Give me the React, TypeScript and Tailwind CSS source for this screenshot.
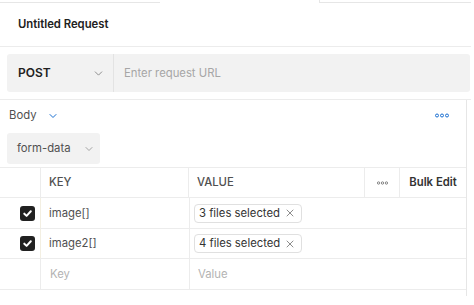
import { ChevronDown, X } from 'lucide-react';

const ROWS = [
  { key: 'image[]', value: '3 files selected', h: 'h-[31px]' },
  { key: 'image2[]', value: '4 files selected', h: 'h-[30px]' },
];

function Check() {
  return (
    <span className="flex h-[15px] w-[15px] items-center justify-center rounded-[3px] bg-[#212121]">
      <svg viewBox="0 0 12 12" className="h-[11px] w-[11px]" fill="none" stroke="white" strokeWidth="2.2" strokeLinecap="round" strokeLinejoin="round">
        <path d="M2.5 6.2 5 8.6 9.6 3.6" />
      </svg>
    </span>
  );
}

function Dots({ className }: { className: string }) {
  return (
    <svg viewBox="0 0 14 4" className={className} fill="none" stroke="currentColor" strokeWidth="1">
      <circle cx="2" cy="2" r="1.5" />
      <circle cx="7" cy="2" r="1.5" />
      <circle cx="12" cy="2" r="1.5" />
    </svg>
  );
}

export default function App() {
  return (
    <div className="h-[305px] w-[474px] overflow-hidden bg-white text-[11.3px] text-[#212121]" style={{ fontFamily: 'Inter, "Noto Sans", sans-serif' }}>
      <div className="flex h-[3px]">
        <div className="w-[160px] border-b border-[#e6e6e6]" />
        <div className="w-[159px]" />
        <div className="w-[152px] border-b border-l border-[#e6e6e6]" />
      </div>
      <div className="flex h-[44px] w-[471px] items-center border-b border-[#ececec] pl-[18px] pb-[1px] font-semibold">
        Untitled Request
      </div>
      <div className="ml-[7px] mt-[7px] flex h-[38px] w-[463px] rounded-[3px] bg-[#f2f2f2]">
        <div className="flex w-[107px] items-center justify-between border-r border-[#e3e3e3] pl-[11px] pr-[8px]">
          <span className="text-[12px] font-semibold">POST</span>
          <ChevronDown className="h-[13px] w-[13px] text-[#777]" strokeWidth={1.5} />
        </div>
        <div className="flex items-center pl-[10px] text-[#a6a6a6]">Enter request URL</div>
      </div>
      <div className="mt-[7px] w-[471px] border-b border-[#ececec]" />
      <div className="h-[196px] w-[467px] border-r border-[#e6e6e6]">
        <div className="flex h-[31px] items-center pl-[9px] pr-[17px]">
          <span className="text-[#505050]">Body</span>
          <ChevronDown className="ml-[10px] h-[12px] w-[12px] text-[#1a6fd1]" strokeWidth={2} />
          <Dots className="ml-auto h-[5px] w-[14px] text-[#1a6fd1]" />
        </div>
        <div className="ml-[7px] mt-[2px] flex h-[31px] w-[93px] items-center rounded-[3px] bg-[#f2f2f2] pl-[10px] text-[#505050]">
          form-data
          <ChevronDown className="ml-[12px] h-[12px] w-[12px] text-[#888]" strokeWidth={1.5} />
        </div>
        <div className="mt-[3px] border-t border-[#ececec]">
          <div className="flex h-[30px] border-b border-[#ececec] font-medium text-[#505050]">
            <div className="w-[41px] border-r border-[#ececec]" />
            <div className="flex w-[148px] items-center border-r border-[#ececec] pl-[8px]">KEY</div>
            <div className="flex w-[176px] items-center border-r border-[#ececec] pl-[8px]">VALUE</div>
            <div className="flex w-[35px] items-center justify-center border-r border-[#ececec]">
              <Dots className="h-[4px] w-[11px] text-[#666]" />
            </div>
            <div className="flex flex-1 items-center justify-center font-semibold text-[#333]">Bulk Edit</div>
          </div>
          {ROWS.map((r) => (
            <div key={r.key} className={`flex ${r.h} border-b border-[#ececec]`}>
              <div className="flex w-[41px] items-center justify-end border-r border-[#f3efe2] pr-[5px]">
                <Check />
              </div>
              <div className="flex w-[148px] items-center pl-[8px] text-[#505050]">{r.key}</div>
              <div className="flex items-center border-l border-[#ececec] pl-[4px]">
                <span className="flex h-[19px] items-center rounded-[4px] border border-[#e0e0e0] pl-[4px] pr-[5px] text-[#333]">
                  {r.value}
                  <X className="ml-[4px] h-[12px] w-[12px] text-[#666]" strokeWidth={1.5} />
                </span>
              </div>
            </div>
          ))}
          <div className="flex h-[31px] border-b border-[#ececec] text-[#b3b3b3]">
            <div className="w-[41px] border-r border-[#ececec]" />
            <div className="flex w-[148px] items-center pl-[9px]">Key</div>
            <div className="flex items-center border-l border-[#ececec] pl-[8px]">Value</div>
          </div>
        </div>
      </div>
    </div>
  );
}
